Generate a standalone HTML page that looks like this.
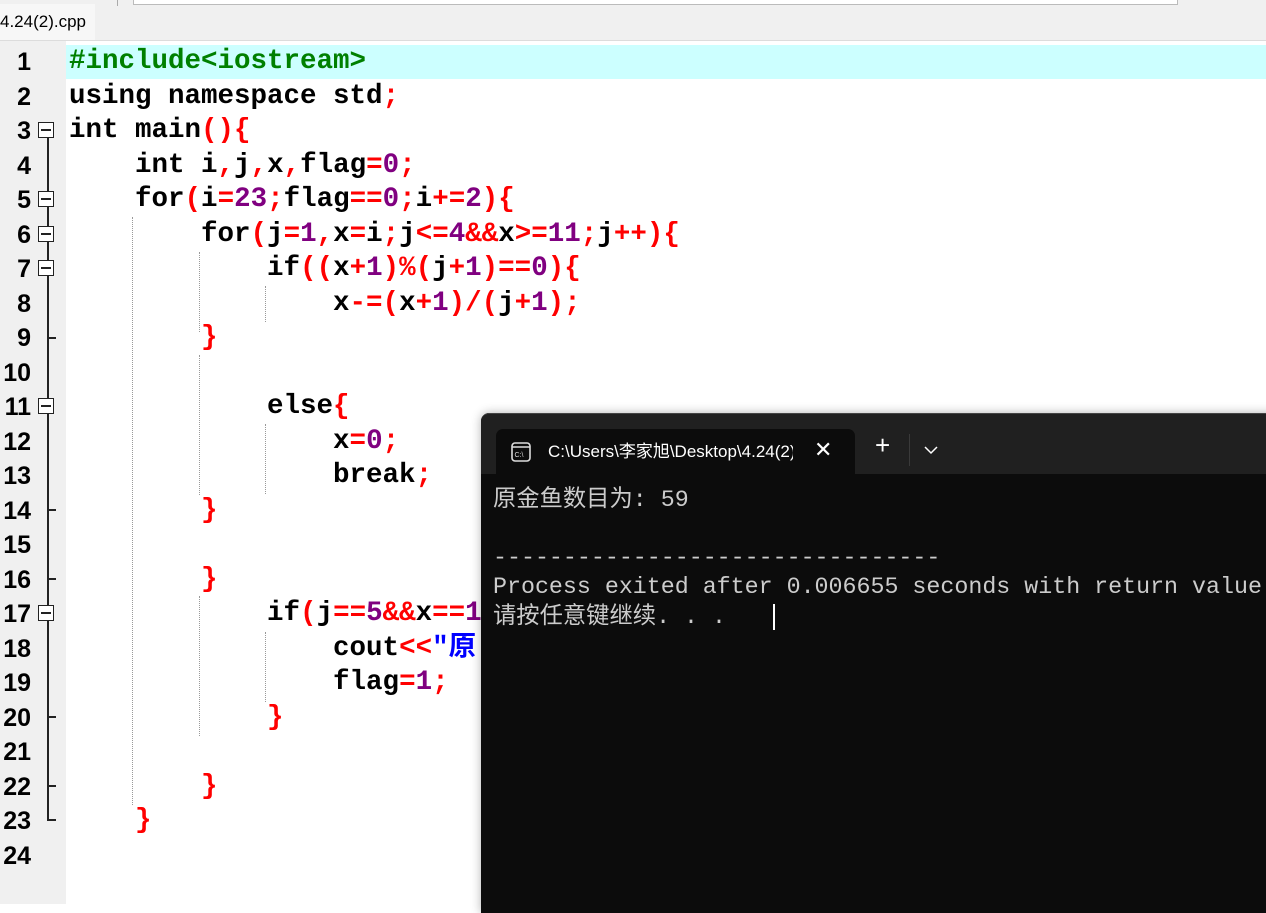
<!DOCTYPE html>
<html><head><meta charset="utf-8"><style>
body{margin:0;width:1266px;height:904px;overflow:hidden;background:#fff;position:relative;font-family:"Liberation Sans","Noto Sans CJK SC",sans-serif}
.top{position:absolute;left:0;top:0;width:1266px;height:40px;background:#f0f0f0;border-bottom:1px solid #dcdcdc}
.tab{position:absolute;left:0;top:4px;width:95px;height:36px;background:#f7f7f7;font-size:17px;line-height:36px;color:#000}
.gut{position:absolute;left:0;top:41px;width:66px;height:863px;background:#f0f0f0}
.ln{position:absolute;left:0;width:31px;text-align:right;font:bold 25px "Liberation Sans",sans-serif;color:#000;height:34.5px;line-height:34.5px}
.box{position:absolute;left:38px;width:16px;height:16px;border:1.5px solid #222;background:#fff;box-sizing:border-box}
.box:after{content:"";position:absolute;left:2px;right:2px;top:6px;height:1.5px;background:#222}
.tick{position:absolute;left:47px;width:9px;height:1.5px;background:#222}
.hl{position:absolute;left:66px;top:45px;width:1200px;height:34px;background:#ccffff}
.code{position:absolute;left:69px;white-space:pre;font:bold 27.5px "Liberation Mono","Noto Sans CJK SC",monospace;line-height:34.5px;height:34.5px;color:#000}
.r{color:#ff0000}.p{color:#800080}.g{color:#008000}.b{color:#0000ff}
.guide{position:absolute;width:0;border-left:1px dotted #999}
.con{position:absolute;left:481px;top:413px;width:800px;height:500px;background:#0c0c0c;border-radius:8px 0 0 0;box-shadow:0 0 10px rgba(0,0,0,.3)}
.tb{position:absolute;left:0;top:0;right:0;height:60px;background:#202020;border-radius:8px 0 0 0;border-top:1px solid #444}
.ctab{position:absolute;left:15px;top:15px;width:359px;height:45px;background:#0c0c0c;border-radius:7px 7px 0 0}
.term{position:absolute;left:12px;font:23.3px "Liberation Mono","Noto Sans CJK SC",monospace;color:#cccccc;white-space:pre;line-height:30px}
</style></head><body>
<div class="top"><div style="position:absolute;left:117px;top:0;width:1px;height:6px;background:#aaa"></div><div style="position:absolute;left:133px;top:0;width:1043px;height:4px;border:1px solid #bbb;border-top:none;background:#fff"></div></div>
<div class="tab">4.24(2).cpp</div>
<div class="gut"></div>
<div class="hl"></div>
<div style="position:absolute;left:47px;top:138px;width:1.5px;height:682px;background:#222"></div>
<div style="position:absolute;left:47px;top:819px;width:9px;height:1.5px;background:#222"></div>
<div class="box" style="top:122px"></div><div class="box" style="top:191px"></div><div class="box" style="top:226px"></div><div class="box" style="top:260px"></div><div class="box" style="top:398px"></div><div class="box" style="top:605px"></div>
<div class="tick" style="top:337px"></div><div class="tick" style="top:509px"></div><div class="tick" style="top:578px"></div><div class="tick" style="top:716px"></div><div class="tick" style="top:785px"></div>
<div class="ln" style="top:45px">1</div><div class="ln" style="top:79.5px">2</div><div class="ln" style="top:114px">3</div><div class="ln" style="top:148.5px">4</div><div class="ln" style="top:183px">5</div><div class="ln" style="top:217.5px">6</div><div class="ln" style="top:252px">7</div><div class="ln" style="top:286.5px">8</div><div class="ln" style="top:321px">9</div><div class="ln" style="top:355.5px">10</div><div class="ln" style="top:390px">11</div><div class="ln" style="top:424.5px">12</div><div class="ln" style="top:459px">13</div><div class="ln" style="top:493.5px">14</div><div class="ln" style="top:528px">15</div><div class="ln" style="top:562.5px">16</div><div class="ln" style="top:597px">17</div><div class="ln" style="top:631.5px">18</div><div class="ln" style="top:666px">19</div><div class="ln" style="top:700.5px">20</div><div class="ln" style="top:735px">21</div><div class="ln" style="top:769.5px">22</div><div class="ln" style="top:804px">23</div><div class="ln" style="top:838.5px">24</div>
<div class="guide" style="left:132px;top:217px;height:588px"></div>
<div class="guide" style="left:199px;top:252px;height:80px"></div>
<div class="guide" style="left:199px;top:355px;height:140px"></div>
<div class="guide" style="left:199px;top:596px;height:140px"></div>
<div class="guide" style="left:265px;top:286px;height:36px"></div>
<div class="guide" style="left:265px;top:424px;height:70px"></div>
<div class="guide" style="left:265px;top:632px;height:70px"></div>
<div class="code" style="top:45px"><span class="g">#include&lt;iostream&gt;</span></div>
<div class="code" style="top:79.5px">using namespace std<span class="r">;</span></div>
<div class="code" style="top:114px">int main<span class="r">(){</span></div>
<div class="code" style="top:148.5px">    int i<span class="r">,</span>j<span class="r">,</span>x<span class="r">,</span>flag<span class="r">=</span><span class="p">0</span><span class="r">;</span></div>
<div class="code" style="top:183px">    for<span class="r">(</span>i<span class="r">=</span><span class="p">23</span><span class="r">;</span>flag<span class="r">==</span><span class="p">0</span><span class="r">;</span>i<span class="r">+=</span><span class="p">2</span><span class="r">){</span></div>
<div class="code" style="top:217.5px">        for<span class="r">(</span>j<span class="r">=</span><span class="p">1</span><span class="r">,</span>x<span class="r">=</span>i<span class="r">;</span>j<span class="r">&lt;=</span><span class="p">4</span><span class="r">&amp;&amp;</span>x<span class="r">&gt;=</span><span class="p">11</span><span class="r">;</span>j<span class="r">++){</span></div>
<div class="code" style="top:252px">            if<span class="r">((</span>x<span class="r">+</span><span class="p">1</span><span class="r">)%(</span>j<span class="r">+</span><span class="p">1</span><span class="r">)==</span><span class="p">0</span><span class="r">){</span></div>
<div class="code" style="top:286.5px">                x<span class="r">-=(</span>x<span class="r">+</span><span class="p">1</span><span class="r">)/(</span>j<span class="r">+</span><span class="p">1</span><span class="r">);</span></div>
<div class="code" style="top:321px">        <span class="r">}</span></div>
<div class="code" style="top:390px">            else<span class="r">{</span></div>
<div class="code" style="top:424.5px">                x<span class="r">=</span><span class="p">0</span><span class="r">;</span></div>
<div class="code" style="top:459px">                break<span class="r">;</span></div>
<div class="code" style="top:493.5px">        <span class="r">}</span></div>
<div class="code" style="top:562.5px">        <span class="r">}</span></div>
<div class="code" style="top:597px">            if<span class="r">(</span>j<span class="r">==</span><span class="p">5</span><span class="r">&amp;&amp;</span>x<span class="r">==</span><span class="p">1</span></div>
<div class="code" style="top:631.5px">                cout<span class="r">&lt;&lt;</span><span class="b">"原</span></div>
<div class="code" style="top:666px">                flag<span class="r">=</span><span class="p">1</span><span class="r">;</span></div>
<div class="code" style="top:700.5px">            <span class="r">}</span></div>
<div class="code" style="top:769.5px">        <span class="r">}</span></div>
<div class="code" style="top:804px">    <span class="r">}</span></div>
<div class="con">
<div class="tb"><div class="ctab">
<svg style="position:absolute;left:15px;top:13px" width="20" height="20" viewBox="0 0 20 20"><rect x="1" y="1" width="18" height="18" rx="3" fill="none" stroke="#ddd" stroke-width="1.6"/><line x1="1" y1="5" x2="19" y2="5" stroke="#ddd" stroke-width="1.4"/><text x="3.5" y="15" font-size="7" fill="#ddd" font-family="Liberation Sans">C:\</text></svg>
<div style="position:absolute;left:52px;top:12px;width:245px;overflow:hidden;white-space:nowrap;font-size:17px;color:#fff;line-height:22px">C:\Users\李家旭\Desktop\4.24(2).exe</div>
<div style="position:absolute;left:318px;top:8px;font-size:22px;color:#fff">✕</div>
</div>
<div style="position:absolute;left:394px;top:18px;font-size:26px;color:#fff;line-height:26px;font-weight:300">+</div>
<div style="position:absolute;left:428px;top:20px;width:1px;height:32px;background:#3a3a3a"></div>
<svg style="position:absolute;left:443px;top:32px" width="14" height="9"><path d="M1 1 L7 7 L13 1" fill="none" stroke="#fff" stroke-width="1.5"/></svg>
</div>
<div class="term" style="top:72px">原金鱼数目为: 59</div>
<div class="term" style="top:130px">--------------------------------</div>
<div class="term" style="top:159px">Process exited after 0.006655 seconds with return value 0</div>
<div class="term" style="top:189px">请按任意键继续. . . </div>
<div style="position:absolute;left:292px;top:191px;width:1.5px;height:26px;background:#fff"></div>
</div>
</body></html>
